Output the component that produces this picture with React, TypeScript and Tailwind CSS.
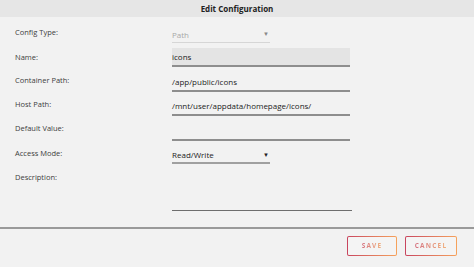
import React from 'react';

const font = { fontFamily: '"Open Sans", "Noto Sans", sans-serif' };

function Label({ children }: { children: React.ReactNode }) {
  return <div className="w-[172px] pl-[15px] text-[7.5px] leading-[12px] text-[#404040]">{children}</div>;
}

function GradientButton({ children, className }: { children: React.ReactNode; className?: string }) {
  return (
    <div className={`rounded-[2px] bg-gradient-to-r from-[#c8445e] to-[#f6a35c] p-[1px] ${className ?? ''}`}>
      <div className="flex h-full w-full items-center justify-center rounded-[1px] bg-[#f4f4f4]">
        <span className="bg-gradient-to-r from-[#d4717f] to-[#f1b07a] bg-clip-text text-[6.5px] font-bold tracking-[1.2px] text-transparent">
          {children}
        </span>
      </div>
    </div>
  );
}

export default function App() {
  return (
    <div className="flex h-[267px] w-[474px] flex-col overflow-hidden bg-[#f2f2f2]" style={font}>
      {/* Header */}
      <div className="flex h-[17px] shrink-0 items-center justify-center bg-[#e6e6e6] text-[8px] font-bold text-[#222]">
        Edit Configuration
      </div>

      {/* Form */}
      <div className="flex flex-col pt-[9px]">
        <div className="flex h-[24px] items-start">
          <Label>Config Type:</Label>
          <div className="mt-[1px] flex h-[16px] w-[98px] items-center justify-between border-b border-[#d6d6d6] pr-[1px] text-[8px] text-[#a8a8a8]">
            <span>Path</span>
            <span className="text-[6px] text-[#888]">▼</span>
          </div>
        </div>

        <div className="flex h-[24px] items-start">
          <Label>
            <span className="relative top-[1px]">Name:</span>
          </Label>
          <div className="-mt-[2px] flex h-[19px] w-[178px] items-center border-b-2 border-[#8e8e8e] bg-[#e4e4e4] text-[8px] text-[#222]">
            icons
          </div>
        </div>

        <div className="flex h-[24px] items-start">
          <Label>Container Path:</Label>
          <div className="flex h-[18px] w-[178px] items-center border-b-2 border-[#8e8e8e] text-[8px] text-[#222]">
            /app/public/icons
          </div>
        </div>

        <div className="flex h-[24px] items-start">
          <Label>Host Path:</Label>
          <div className="flex h-[18px] w-[178px] items-center border-b-2 border-[#8e8e8e] text-[8px] text-[#222]">
            /mnt/user/appdata/homepage/icons/
          </div>
        </div>

        <div className="flex h-[25px] items-start">
          <Label>Default Value:</Label>
          <div className="h-[19px] w-[178px] border-b-2 border-[#8e8e8e]" />
        </div>

        <div className="flex h-[24px] items-start">
          <Label>Access Mode:</Label>
          <div className="mt-[1px] flex h-[16px] w-[98px] items-center justify-between border-b-2 border-[#a0a0a0] pr-[1px] text-[8px] text-[#222]">
            <span>Read/Write</span>
            <span className="text-[6px] text-[#222]">▼</span>
          </div>
        </div>

        <div className="flex h-[42px] items-start">
          <Label>Description:</Label>
          <div className="h-[40px] w-[180px] border-b border-[#6e6e6e]" />
        </div>
      </div>

      {/* Footer */}
      <div className="mt-auto border-t-2 border-[#9a9a9a]">
        <div className="flex h-[38px] items-start justify-end gap-[8px] pr-[17px] pt-[7px]">
          <GradientButton className="h-[20px] w-[50px]">SAVE</GradientButton>
          <GradientButton className="h-[20px] w-[52px]">CANCEL</GradientButton>
        </div>
      </div>
    </div>
  );
}
